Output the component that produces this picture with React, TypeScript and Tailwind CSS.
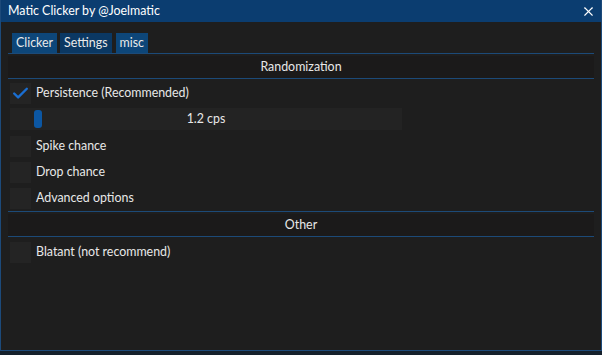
import { Check, X } from 'lucide-react';

const ROWS_TOP = ['Spike chance', 'Drop chance', 'Advanced options'];

function Checkbox({ checked, label }: { checked?: boolean; label: string }) {
  return (
    <div className="flex items-center h-[26px] pl-[2px]">
      <div className="w-[21px] h-[21px] bg-[#242424] flex items-center justify-center">
        {checked && <Check size={19} strokeWidth={3} className="text-[#1a6ed1]" />}
      </div>
      <span className="ml-[5px] text-[12.4px] text-[#e8e8e8]">{label}</span>
    </div>
  );
}

function Header({ title }: { title: string }) {
  return (
    <div className="h-[23px] flex items-center justify-center bg-[#1b1a1a] border-b border-[#1c4a78] text-[12.4px] text-[#e8e8e8]">
      {title}
    </div>
  );
}

export default function App() {
  return (
    <div className="w-[602px] h-[355px] bg-[#15202b] font-['Lato',sans-serif]">
      <div className="h-[351px] flex flex-col bg-[#1e1e1e] border-x border-b border-[#1c4a7a]">
        {/* title bar */}
        <div className="h-[22px] bg-[#0b3d70] flex items-center justify-between pl-[7px] pr-[5px] shrink-0">
          <span className="text-[12.4px] text-white">Matic Clicker by @Joelmatic</span>
          <X size={15} strokeWidth={1.8} className="text-white" />
        </div>

        <div className="flex-1 flex flex-col px-[7px]">
          {/* tabs */}
          <div className="flex gap-[3px] pt-[11px] pl-[4px] border-b border-[#1c4a78]">
            <div className="h-[20px] px-[4px] flex items-center bg-[#0d4679] text-[12.4px] text-[#eaeaea]">Clicker</div>
            <div className="h-[20px] px-[4px] flex items-center bg-[#0b3863] text-[12.4px] text-[#eaeaea]">Settings</div>
            <div className="h-[20px] px-[4px] ml-[1px] flex items-center bg-[#0d4679] text-[12.4px] text-[#eaeaea]">misc</div>
          </div>
          <div className="h-[2px]" />

          <Header title="Randomization" />
          <div className="pt-[1px]">
            <Checkbox checked label="Persistence (Recommended)" />
            <div className="ml-[2px] w-[392px] h-[22px] bg-[#232323] relative flex items-center justify-center mt-[2px] mb-[3px]">
              <div className="absolute left-[24px] top-[2px] w-[8px] h-[18px] rounded-[3px] bg-[#0c57a3]" />
              <span className="text-[12.4px] text-[#e8e8e8]">1.2 cps</span>
            </div>
            {ROWS_TOP.map((r) => (
              <Checkbox key={r} label={r} />
            ))}
          </div>
          <div className="h-[3px] border-t border-[#1c4a78]" />
          <Header title="Other" />
          <div className="pt-[2px]">
            <Checkbox label="Blatant (not recommend)" />
          </div>
        </div>
      </div>
    </div>
  );
}
